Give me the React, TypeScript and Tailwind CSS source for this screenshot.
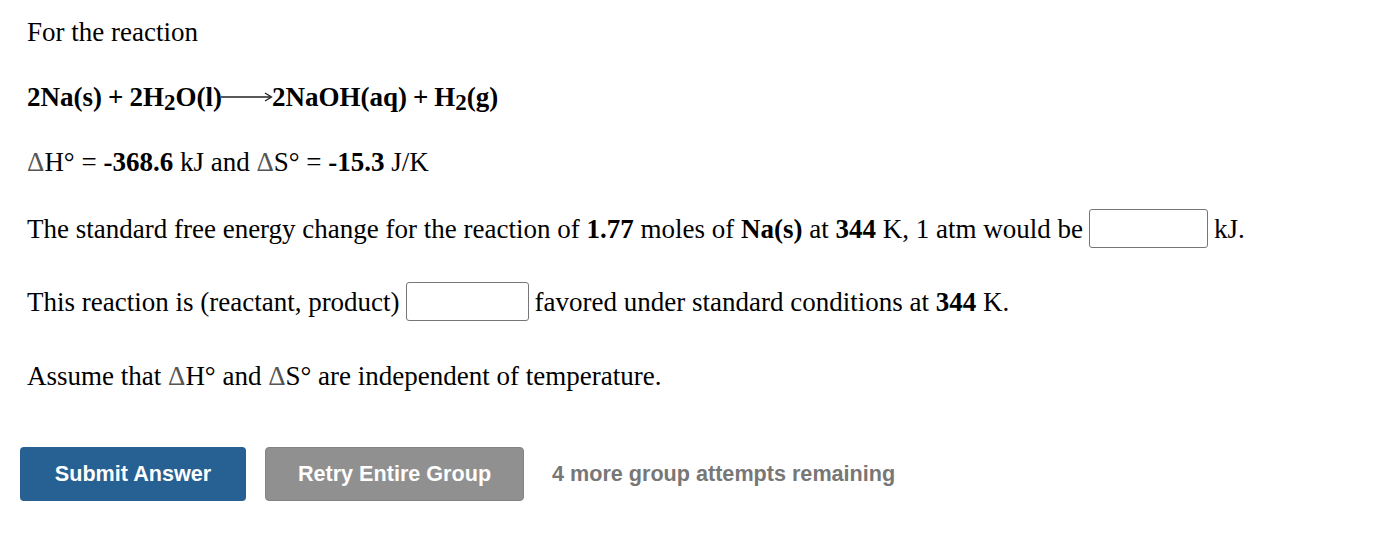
import React from 'react'

const Delta = () => <span className="text-[#555]">Δ</span>

const AnswerBox = ({ w }: { w: string }) => (
  <input
    type="text"
    className={`${w} h-[39px] mx-[6px] rounded-[3px] border border-[#767676] bg-white align-middle outline-none`}
  />
)

export default function App() {
  return (
    <div className="w-[1380px] h-[560px] bg-white text-black">
      <div className="pl-[27px] pt-[14px] text-[27px] leading-[36px] font-['Liberation_Serif',serif]">
        <p>For the reaction</p>

        <p className="mt-[29px] font-bold flex items-center">
          <span>
            2Na(s)<span className="mx-[6px]">+</span>2H<sub className="text-[23px] relative top-[4px] align-baseline">2</sub>O(l)
          </span>
          <svg width="52" height="12" viewBox="0 0 52 12" className="mx-[-1px]">
            <line x1="0" y1="6" x2="50" y2="6" stroke="#222" strokeWidth="1.3" />
            <path d="M44 2 L50.5 6 L44 10" fill="none" stroke="#222" strokeWidth="1.3" />
          </svg>
          <span>
            2NaOH(aq)<span className="mx-[6px]">+</span>H<sub className="text-[23px] relative top-[4px] align-baseline">2</sub>(g)
          </span>
        </p>

        <p className="mt-[29px]">
          <Delta />H° = <b>-368.6</b> kJ and <Delta />S° = <b>-15.3</b> J/K
        </p>

        <p className="mt-[29px] flex items-center">
          The standard free energy change for the reaction of&nbsp;<b>1.77</b>&nbsp;moles of&nbsp;<b>Na(s)</b>&nbsp;at&nbsp;<b>344</b>&nbsp;K, 1 atm would be
          <AnswerBox w="w-[119px]" />
          kJ.
        </p>

        <p className="mt-[34px] flex items-center">
          This reaction is (reactant, product)
          <AnswerBox w="w-[123px]" />
          favored under standard conditions at&nbsp;<b>344</b>&nbsp;K.
        </p>

        <p className="mt-[37px]">
          Assume that <Delta />H° and <Delta />S° are independent of temperature.
        </p>
      </div>

      <div className="mt-[53px] pl-[20px] flex items-center font-['Liberation_Sans',Arial,sans-serif] font-bold text-[21.6px]">
        <button className="w-[226px] h-[54px] rounded-[4px] bg-[#276092] text-white">Submit Answer</button>
        <button className="ml-[19px] w-[259px] h-[54px] rounded-[4px] bg-[#909090] border border-[#838383] text-white">
          Retry Entire Group
        </button>
        <span className="ml-[28px] text-[#777777]">4 more group attempts remaining</span>
      </div>
    </div>
  )
}
